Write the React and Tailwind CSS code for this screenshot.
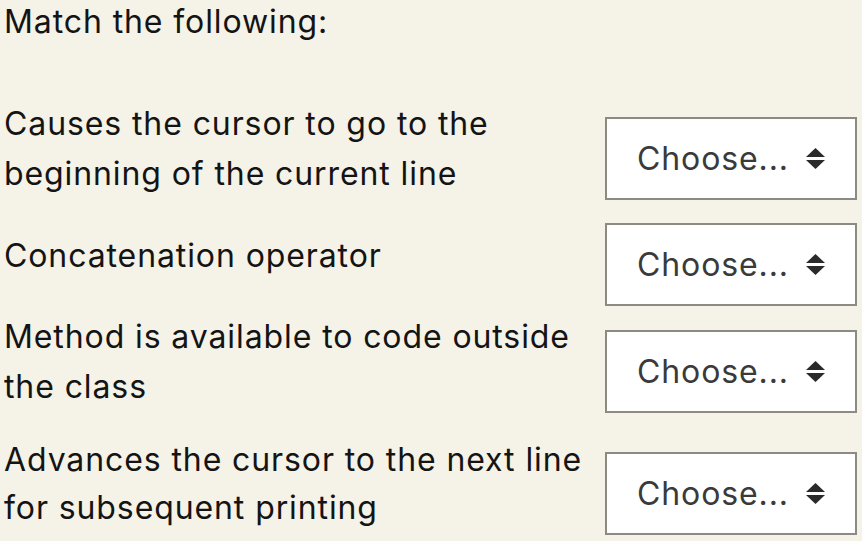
import React from "react";

function Select({ mt }) {
  return (
    <div
      className={`ml-auto mr-[5px] w-[252px] h-[83px] shrink-0 border-2 border-[#8d8a84] bg-white flex items-center pl-[30px] pr-[30px] ${mt}`}
    >
      <span className="text-[32px] leading-none text-[#3a3a3a] tracking-[0.9px]">Choose...</span>
      <svg className="ml-auto" width="19" height="21" viewBox="0 0 19 21">
        <polygon points="9.5,0 19,9 0,9" fill="#2a2a2a" />
        <polygon points="0,12 19,12 9.5,21" fill="#2a2a2a" />
      </svg>
    </div>
  );
}

export default function App() {
  return (
    <div
      className="w-[862px] h-[541px] overflow-hidden bg-[#f5f2e8] text-[#141414] pl-[4px] tracking-[0.9px]"
      style={{ fontFamily: "Inter, 'Noto Sans', sans-serif" }}
    >
      <div className="text-[32px] leading-[50px] mt-[-3px] h-[50px]">Match the following:</div>

      <div className="flex items-start mt-[52px]">
        <div className="text-[32px] leading-[50px]">
          Causes the cursor to go to the
          <br />
          beginning of the current line
        </div>
        <Select mt="mt-[18px]" />
      </div>

      <div className="flex items-start mt-[23px]">
        <div className="text-[32px] leading-[50px] mt-[8px]">Concatenation operator</div>
        <Select mt="mt-0" />
      </div>

      <div className="flex items-start mt-[6px]">
        <div className="text-[32px] leading-[50px]">
          Method is available to code outside
          <br />
          the class
        </div>
        <Select mt="mt-[18px]" />
      </div>

      <div className="flex items-start mt-[23px]">
        <div className="text-[32px] leading-[48px]">
          Advances the cursor to the next line
          <br />
          for subsequent printing
        </div>
        <Select mt="mt-[16px]" />
      </div>
    </div>
  );
}
